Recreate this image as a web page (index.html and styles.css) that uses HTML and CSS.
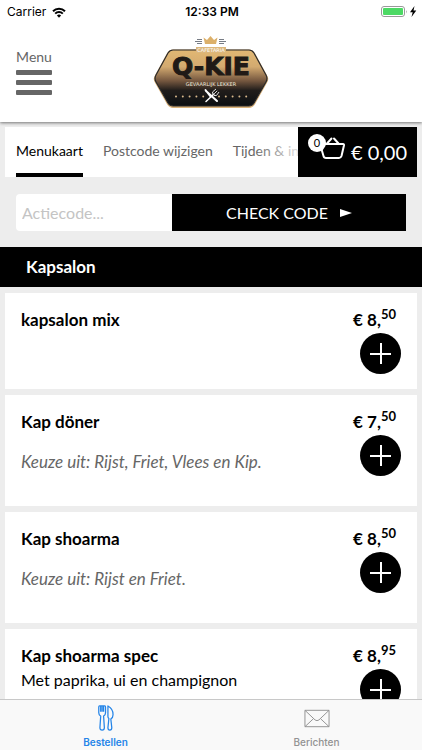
FILE: index.html
```html
<!DOCTYPE html>
<html lang="nl">
<head>
<meta charset="utf-8">
<meta name="viewport" content="width=device-width, initial-scale=1">
<title>Q-KIE</title>
<link rel="stylesheet" href="styles.css">
</head>
<body>
<div class="app">
  <header class="top">
    <div class="status">
      <span class="carrier">Carrier
        <svg width="14" height="11" viewBox="0 0 14 11" fill="none" stroke="#000" stroke-width="2"><path d="M1 4.200a8.500 8.500 0 0 1 12 0M3.200 6.600a5.400 5.400 0 0 1 7.600 0"/><path d="M7 10.800L4.900 8.600a3 3 0 0 1 4.200 0z" fill="#000" stroke="none"/></svg>
      </span>
      <span class="clock">12:33 PM</span>
      <span class="battery">
        <svg width="36" height="12" viewBox="0 0 36 12"><rect x=".5" y=".5" width="23" height="10" rx="2.500" fill="#fff" stroke="#999"/><rect x="2" y="2" width="20" height="7" rx="1" fill="#4cd964"/><path d="M25 4v3.500q1.500-1.700 0-3.500" fill="#999"/><path d="M33.500 0L29 6.200h2.700L30.500 11l4.800-6.400h-2.800z"/></svg>
      </span>
    </div>
    <div class="brand">
      <button class="menu" type="button">Menu
        <span class="bar"></span><span class="bar"></span><span class="bar"></span>
      </button>
      <svg class="logo" width="116" height="74" viewBox="0 0 116 74" role="img" aria-label="Cafetaria Q-KIE">
        <defs>
          <linearGradient id="gold" x1="0" y1="0" x2="0" y2="1">
            <stop offset="0" stop-color="#e2b873"/><stop offset=".3" stop-color="#d3aa70"/>
            <stop offset=".55" stop-color="#75573f"/><stop offset=".72" stop-color="#211d1b"/><stop offset="1" stop-color="#0b0f12"/>
          </linearGradient>
        </defs>
        <path d="M20 15.500h76q3 0 5 3l12 22q2.500 3.500 0 7L101 69q-2 3-5 3H20q-3 0-5-3L3 47.500q-2.500-3.500 0-7l12-22q2-3 5-3z" fill="#d9b27a" stroke="#d9b27a" stroke-width="2"/>
        <path d="M20 15h76q3 0 5 3l12 22q2 3.500 0 7L101 68q-2 3-5 3H20q-3 0-5-3L3 47q-2-3.500 0-7l12-22q2-3 5-3z" fill="url(#gold)" stroke="#29292b" stroke-width="1.200"/>
        <path d="M52 9L50.500 2.500l3.500 2.500L57.500 1 61 5l3.500-2.500L63 9z" fill="#dcb06a"/>
        <path d="M42 6.500h7M44 4.500h5M44 8.500h5M66 6.500h7M66 4.500h5M66 8.500h5" stroke="#777c85"/>
        <path d="M43 12h30v6H43z" fill="#dcb77c"/>
        <text class="logo-small" x="58" y="17" fill="#fff">CAFETARIA</text>
        <text class="logo-name" x="58" y="40" fill="#201a16" stroke="#201a16">Q-KIE</text>
        <text class="logo-small" x="58" y="51" fill="#f2e9dd">GEVAARLIJK LEKKER</text>
        <path d="M23 61.500h29M66 61.500h28" stroke="#d9b98c" stroke-width="2" stroke-linecap="round" stroke-dasharray="0 6.800"/>
        <path d="M53 56l11 10M52.500 55l5 6.500" stroke="#fff" stroke-width="2" stroke-linecap="round"/>
        <path d="M53 66.500L61 59" stroke="#fff" stroke-width="1.500" stroke-linecap="round"/>
        <path d="M60 60l-.5-3 3.500-3M61.200 58.800l3-3M61 60.500l2.500 0 2.500-3.500" stroke="#ddd" fill="none"/>
      </svg>
    </div>
  </header>

  <main class="content">
    <div class="navrow">
      <nav class="tabs">
        <a class="tab active" href="#menukaart">Menukaart</a>
        <a class="tab" href="#postcode">Postcode wijzigen</a>
        <a class="tab" href="#tijden">Tijden &amp; info</a>
      </nav>
      <a class="cart" href="#cart">
        <span class="basket">
          <svg width="30" height="28" viewBox="0 0 30 28" fill="none" stroke="#fff" stroke-width="2" stroke-linejoin="round" stroke-linecap="round"><path d="M2 10h23q1.200 0 1 1.200L23.500 22q-.7 2-2.500 2H8q-2 0-2.500-2L2 10zM9 9.500l4.500-5M20.500 9.500L16 4.500"/></svg>
          <span class="count">0</span>
        </span>
        <span>€ 0,00</span>
      </a>
    </div>

    <form class="coupon">
      <input class="code" type="text" placeholder="Actiecode..." aria-label="Actiecode">
      <button class="check" type="button">CHECK CODE
        <svg width="12" height="8" viewBox="0 0 12 8"><path d="M0 0l12 4L0 8z" fill="#fff"/></svg>
      </button>
    </form>

    <h2 class="category">Kapsalon</h2>

    <div class="products">
      <article class="product">
        <div class="info"><h3>kapsalon mix</h3></div>
        <div class="buy">
          <span class="price">€ 8,<sup>50</sup></span>
          <button class="add" type="button" aria-label="kapsalon mix toevoegen"></button>
        </div>
      </article>
      <article class="product">
        <div class="info"><h3>Kap döner</h3><p class="choice">Keuze uit: Rijst, Friet, Vlees en Kip.</p></div>
        <div class="buy">
          <span class="price">€ 7,<sup>50</sup></span>
          <button class="add" type="button" aria-label="Kap döner toevoegen"></button>
        </div>
      </article>
      <article class="product">
        <div class="info"><h3>Kap shoarma</h3><p class="choice">Keuze uit: Rijst en Friet.</p></div>
        <div class="buy">
          <span class="price">€ 8,<sup>50</sup></span>
          <button class="add" type="button" aria-label="Kap shoarma toevoegen"></button>
        </div>
      </article>
      <article class="product">
        <div class="info"><h3>Kap shoarma spec</h3><p class="desc">Met paprika, ui en champignon</p></div>
        <div class="buy">
          <span class="price">€ 8,<sup>95</sup></span>
          <button class="add" type="button" aria-label="Kap shoarma spec toevoegen"></button>
        </div>
      </article>
    </div>
  </main>

  <nav class="tabbar">
    <a class="item current" href="#bestellen">
      <svg width="18" height="28" viewBox="0 0 18 28" fill="none" stroke="#2585e8" stroke-width="1.300" stroke-linejoin="round"><path d="M1.500 2q0-1 .8-1h5.400q.8 0 .8 1v6q0 2.500-2 3.500l.8 12q0 2.500-2.300 2.500t-2.300-2.500l.8-12q-2-1-2-3.500z"/><path d="M3.500 1v6M5 1v6M6.500 1v6"/><path d="M11 1q5.500 3 5.300 9 0 3-2.300 4.500l1 9q0 2.500-2 2.500t-2-2.500l1-9.500q-1-.5-1-2z"/></svg>
      Bestellen
    </a>
    <a class="item" href="#berichten">
      <svg width="26" height="28" viewBox="0 0 26 28" fill="none" stroke="#929292"><path d="M.5 5.500h25v17H.5zM.5 5.500l10.500 10q2 1.500 4 0l10.500-10M.5 22.500l8.500-8M25.500 22.500l-8.500-8"/></svg>
      Berichten
    </a>
  </nav>
</div>
</body>
</html>
```
FILE: styles.css
```css
* { box-sizing: border-box; }
body { margin: 0; font-family: Lato, "Open Sans", sans-serif; font-size: 17px; line-height: 24px; color: #000; background: #ededed; }
a { color: inherit; text-decoration: none; }
button { font: inherit; border: 0; padding: 0; cursor: pointer; }
h2, h3, p { margin: 0; }

.app { display: flex; flex-direction: column; height: 100vh; }

/* header */
.top { background: #fff; box-shadow: 0 1px 3px rgba(0,0,0,0.5); z-index: 1; }
.status { display: grid; grid-template-columns: 1fr auto 1fr; align-items: center; height: 22px; padding: 0 5px 0 7px; font-family: Inter, sans-serif; font-size: 12px; }
.carrier { display: flex; align-items: center; gap: 6px; }
.clock { font-weight: 600; }
.battery { display: flex; justify-content: flex-end; }
.brand { display: grid; grid-template-columns: 1fr auto 1fr; height: 100px; padding: 13px 16px; }
.menu { display: flex; flex-direction: column; gap: 5px; width: 36px; padding-top: 14px; background: none; color: #666; font-size: 14px; line-height: 16px; white-space: nowrap; }
.bar { width: 36px; height: 5px; border-radius: 1px; background: #666; }
.logo { display: block; }
.logo text { font-family: "DejaVu Sans", sans-serif; font-weight: bold; text-anchor: middle; }
.logo .logo-name { font-size: 25px; }
.logo .logo-small { font-size: 5px; font-weight: normal; }

/* content */
.content { flex: 1; min-height: 0; overflow: auto; scrollbar-width: none; padding-top: 5px; }
.navrow { display: flex; height: 50px; margin: 0 5px; background: #fff; }
.tabs { position: relative; display: flex; flex: 1; gap: 20px; min-width: 0; overflow: hidden; padding-left: 11px; }
.tabs::after { content: ""; position: absolute; top: 0; right: 0; width: 44px; height: 100%; background: linear-gradient(to right, rgba(255,255,255,0), rgba(255,255,255,0.8)); }
.tab { flex: none; padding-top: 12px; border-bottom: 4px solid transparent; font-size: 14px; color: #666; }
.active { border-color: #000; color: #000; }
.cart { display: flex; align-items: center; gap: 5px; padding: 0 10px; background: #000; color: #fff; font-size: 20px; }
.basket { position: relative; height: 36px; padding-left: 10px; }
.basket svg { margin-right: -2px; }
.count { position: absolute; left: 0; top: 0; width: 18px; height: 18px; border-radius: 50%; background: #fff; color: #000; font-size: 11px; line-height: 18px; text-align: center; }

.coupon { display: flex; margin: 17px 16px 16px; font-size: 16px; }
.code { flex: none; width: 40%; height: 37px; padding: 0 6px; border: 0; border-radius: 4px 0 0 4px; background: #fff; font: inherit; }
.code::placeholder { color: #c4c4c4; }
.check { display: flex; flex: 1; align-items: center; justify-content: center; gap: 12px; background: #000; color: #fff; }

.category { padding: 8px 26px; background: #000; color: #fff; font-size: 17px; }

.products { display: grid; gap: 6px; padding: 6px 5px; }
.product { display: flex; justify-content: space-between; background: #fff; padding: 15px 16px; }
.info h3 { font-size: 17px; }
.choice { margin: 16px 0 17px; color: #666; font-style: italic; }
.desc { font-size: 16px; }
.buy { display: flex; flex-direction: column; align-items: flex-end; gap: 1px; }
.price { padding-right: 5px; font-weight: bold; }
.price sup { font-size: 13px; line-height: 0; }
.add { width: 41px; height: 41px; border-radius: 50%; background: linear-gradient(#fff, #fff) center / 21px 2px no-repeat, linear-gradient(#fff, #fff) center / 2px 21px no-repeat, #000; }

/* bottom bar */
.tabbar { display: flex; height: 51px; border-top: 1px solid #c8c8c8; background: #f9f9f9; }
.item { display: flex; flex: 1; flex-direction: column; align-items: center; gap: 2px; padding-top: 5px; font-family: Inter, sans-serif; font-size: 10px; font-weight: 500; line-height: 16px; color: #929292; }
.current { color: #2585e8; font-weight: 600; }
```
